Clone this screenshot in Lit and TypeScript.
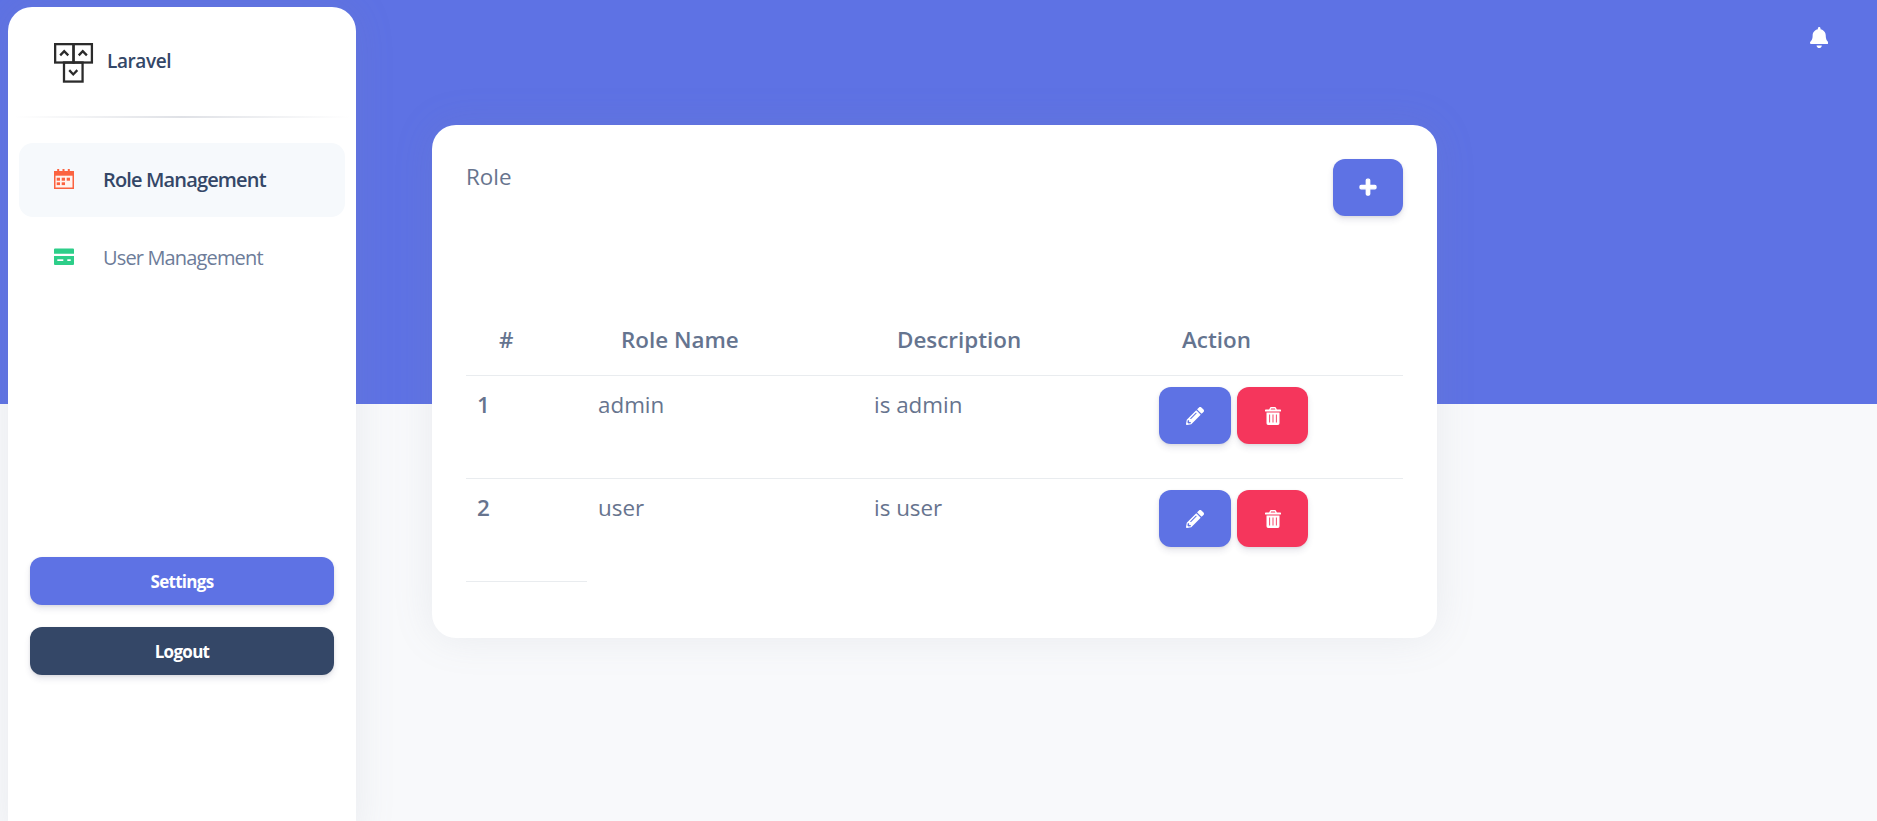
import {customElement} from "lit/decorators.js";
import {css, html, LitElement, svg} from "lit";

const plusIcon = svg`<path stroke="currentColor" stroke-width="36" d="M416 208H272V64c0-17.67-14.33-32-32-32h-32c-17.67 0-32 14.33-32 32v144H32c-17.67 0-32 14.33-32 32v32c0 17.67 14.33 32 32 32h144v144c0 17.67 14.33 32 32 32h32c17.67 0 32-14.33 32-32V304h144c17.67 0 32-14.33 32-32v-32c0-17.67-14.33-32-32-32z"/>`;
const pencilIcon = svg`<path d="M497.9 142.1l-46.1 46.1c-4.7 4.7-12.3 4.7-17 0l-111-111c-4.7-4.7-4.7-12.3 0-17l46.1-46.1c18.7-18.7 49.1-18.7 67.9 0l60.1 60.1c18.8 18.7 18.8 49.1 0 67.9zM284.2 99.8L21.6 362.4.4 483.9c-2.9 16.4 11.4 30.6 27.8 27.8l121.5-21.3 262.6-262.6c4.7-4.7 4.7-12.3 0-17l-111-111c-4.8-4.7-12.4-4.7-17.1 0zM124.1 339.9c-5.5-5.5-5.5-14.3 0-19.8l154-154c5.5-5.5 14.3-5.5 19.8 0s5.5 14.3 0 19.8l-154 154c-5.5 5.5-14.3 5.5-19.8 0zM88 424h48v36.3l-64.5 11.3-31.1-31.1L51.7 376H88v48z"/>`;
const trashIcon = svg`
  <path fill="none" stroke="currentColor" stroke-width="1.4" d="M4.7 3.2 5.5 1.3a.8.8 0 0 1 .7-.5h3.6a.8.8 0 0 1 .7.5l.8 1.9"/>
  <rect x="0" y="2.6" width="16" height="2" rx=".7"/>
  <path fill-rule="evenodd" d="M1.5 5.6h13v10.7a1.6 1.6 0 0 1-1.6 1.6H3.1a1.6 1.6 0 0 1-1.6-1.6zM4.2 7.6v8h.9v-8zM7.55 7.6v8h.9v-8zM10.9 7.6v8h.9v-8z"/>
`;
const bellIcon = svg`<path d="M224 512c35.32 0 63.97-28.65 63.97-64H160.03c0 35.35 28.65 64 63.97 64zm215.39-149.71c-19.32-20.76-55.47-51.99-55.47-154.29 0-77.7-54.48-139.9-127.94-155.16V32c0-17.67-14.32-32-31.98-32s-31.98 14.33-31.98 32v20.84C118.56 68.1 64.08 130.3 64.08 208c0 102.3-36.15 133.53-55.47 154.29-6 6.45-8.66 14.16-8.61 21.71.11 16.4 12.98 32 32.1 32h383.8c19.12 0 32-15.6 32.1-32 .05-7.55-2.61-15.27-8.61-21.71z"/>`;

@customElement("app-root")
export class AppRoot extends LitElement {

  roles = [
    {id: 1, name: "admin", description: "is admin"},
    {id: 2, name: "user", description: "is user"},
  ];

  //language=css
  static styles = css`
    * {
      box-sizing: border-box;
    }

    :host {
      display: block;
      height: 821px;
      overflow: hidden;
      font-family: "Open Sans", "Liberation Sans", sans-serif;
      color: #67748e;
    }

    .page {
      display: flex;
      height: 821px;
      background: linear-gradient(#5e72e4 404px, #f8f9fb 404px);
    }

    .sidebar {
      flex: none;
      display: flex;
      flex-direction: column;
      width: 348px;
      height: 840px;
      margin: 7px 0 0 8px;
      background: #fff;
      border-radius: 24px;
      box-shadow: 0 0 40px rgba(130, 140, 155, .13);
    }

    .brand {
      display: flex;
      align-items: center;
      gap: 13px;
      height: 109px;
      padding: 0 0 2px 46px;
      color: #344767;
      font-size: 19px;
      font-weight: 600;
      letter-spacing: -.4px;
    }

    .brand svg {
      display: block;
      width: 40px;
      height: 40px;
      margin-top: 5px;
    }

    .divider {
      height: 2px;
      margin: 0 6px;
      background: linear-gradient(90deg, transparent, #dfe1e6 50%, transparent);
    }

    .nav {
      display: flex;
      flex-direction: column;
      padding: 25px 11px 0;
      gap: 4px;
    }

    .nav a {
      display: flex;
      align-items: center;
      gap: 28px;
      height: 74px;
      padding: 0 0 2px 34px;
      border-radius: 14px;
      font-size: 20px;
      letter-spacing: -.85px;
      color: #6d7c99;
    }

    .nav a svg {
      display: block;
      flex: none;
      width: 22px;
      height: 22px;
    }

    .nav a.active {
      background: #f6f9fc;
      color: #344767;
      font-weight: 600;
    }

    .side-actions {
      display: flex;
      flex-direction: column;
      gap: 22px;
      margin-top: 262px;
      padding: 0 22px;
    }

    .side-actions button {
      height: 48px;
      border: 0;
      border-radius: 12px;
      color: #fff;
      font: 700 17px "Open Sans", sans-serif;
      letter-spacing: -.7px;
      box-shadow: 0 4px 6px rgba(50, 50, 93, .11), 0 1px 3px rgba(0, 0, 0, .08);
    }

    .btn-primary {
      background: #5e72e4;
    }

    .btn-dark {
      background: #344767;
    }

    .main {
      flex: 1;
      min-width: 0;
      padding-left: 76px;
    }

    .topbar {
      display: flex;
      justify-content: flex-end;
      height: 125px;
      padding: 27px 49px 0 0;
    }

    .topbar svg {
      display: block;
      width: 18.4px;
      height: 21px;
      fill: #fff;
    }

    .card {
      width: 1005px;
      height: 513px;
      padding: 34px;
      background: #fff;
      border-radius: 24px;
      box-shadow: 0 0 40px rgba(130, 140, 155, .13);
    }

    .card-head {
      display: flex;
      justify-content: space-between;
      align-items: flex-start;
      height: 146px;
    }

    .card-head h3 {
      margin: 0;
      font-size: 22.4px;
      line-height: 36px;
      font-weight: 400;
      color: #67748e;
    }

    .icon-btn {
      display: flex;
      align-items: center;
      justify-content: center;
      border: 0;
      padding: 0;
      color: #fff;
      border-radius: 12px;
      box-shadow: 0 4px 6px rgba(50, 50, 93, .11), 0 1px 3px rgba(0, 0, 0, .08);
    }

    .icon-btn svg {
      display: block;
      fill: currentColor;
    }

    .add {
      width: 70px;
      height: 57px;
    }

    .add svg {
      width: 16px;
      height: 18.3px;
      overflow: visible;
    }

    table {
      width: 937px;
      table-layout: fixed;
      border-collapse: collapse;
      font-size: 22.4px;
    }

    th {
      height: 70px;
      padding: 0 0 0 34px;
      text-align: left;
      font-weight: 600;
      color: #65748f;
      border-bottom: 1px solid #e9ecef;
    }

    th:first-child {
      padding-left: 33px;
    }

    td {
      height: 103px;
      padding: 12px 12px 0 11px;
      vertical-align: top;
      color: #67748e;
      line-height: 34px;
    }

    td:first-child {
      font-weight: 600;
      border-bottom: 1px solid #e9ecef;
    }

    tr:first-child td {
      border-bottom: 1px solid #e9ecef;
    }

    .actions {
      display: flex;
      gap: 6px;
      margin-top: -1px;
    }

    .edit, .remove {
      height: 57px;
      padding-top: 1px;
    }

    .edit {
      width: 72px;
      background: #5e72e4;
    }

    .remove {
      width: 71px;
      background: #f5365c;
    }

    .edit svg {
      width: 18px;
      height: 18px;
    }

    .remove svg {
      width: 16px;
      height: 18px;
    }
  `;

  render() {
    return html`
      <div class="page">
        <aside class="sidebar">
          <div class="brand">
            <svg viewBox="0 0 42 42" fill="none" stroke="#2b2b2b" stroke-width="2.4">
              <rect x="1.2" y="1.2" width="19.3" height="19.3"/>
              <rect x="20.5" y="1.2" width="19.3" height="19.3"/>
              <rect x="10.5" y="20.5" width="19.5" height="20"/>
              <polyline points="6.5,13 10.7,8.5 15,13"/>
              <polyline points="26,13 30.2,8.5 34.5,13"/>
              <polyline points="16,28.5 20.2,33 24.5,28.5"/>
            </svg>
            <span>Laravel</span>
          </div>
          <div class="divider"></div>
          <nav class="nav">
            <a class="active">
              <svg viewBox="0 0 22 22">
                <path fill="#fb6340" d="M4.2 1h2v2h3.3V1h2v2h3.3V1h2v2H21v18H1V3h3.2z"/>
                <rect x="2.5" y="7.7" width="17" height="11.8" fill="#fff4f0"/>
                <g fill="#fb6340">
                  <rect x="3.7" y="9.7" width="3.3" height="3"/>
                  <rect x="8.7" y="9.7" width="3.3" height="3"/>
                  <rect x="13.7" y="9.7" width="3.3" height="3"/>
                  <rect x="3.7" y="14.3" width="3.3" height="2.8"/>
                  <rect x="8.7" y="14.3" width="3.3" height="2.8"/>
                </g>
              </svg>
              <span>Role Management</span>
            </a>
            <a>
              <svg viewBox="0 0 22 22">
                <path fill="#2dce89" d="M1 3.5a1 1 0 0 1 1-1h18a1 1 0 0 1 1 1v4.2H1zM1 10h20v8a1 1 0 0 1-1 1H2a1 1 0 0 1-1-1z"/>
                <rect x="4.3" y="13.3" width="6" height="1.7" fill="#fff"/>
                <rect x="14.3" y="13.3" width="3.4" height="1.7" fill="#fff"/>
              </svg>
              <span>User Management</span>
            </a>
          </nav>
          <div class="side-actions">
            <button class="btn-primary">Settings</button>
            <button class="btn-dark">Logout</button>
          </div>
        </aside>
        <main class="main">
          <div class="topbar">
            <svg viewBox="0 0 448 512">${bellIcon}</svg>
          </div>
          <section class="card">
            <div class="card-head">
              <h3>Role</h3>
              <button class="icon-btn btn-primary add"><svg viewBox="0 0 448 512">${plusIcon}</svg></button>
            </div>
            <table>
              <colgroup>
                <col style="width: 121px"><col style="width: 276px"><col style="width: 285px"><col>
              </colgroup>
              <thead>
                <tr><th>#</th><th>Role Name</th><th>Description</th><th>Action</th></tr>
              </thead>
              <tbody>
                ${this.roles.map((x) => html`
                  <tr>
                    <td>${x.id}</td>
                    <td>${x.name}</td>
                    <td>${x.description}</td>
                    <td>
                      <div class="actions">
                        <button class="icon-btn edit"><svg viewBox="0 0 512 512">${pencilIcon}</svg></button>
                        <button class="icon-btn remove"><svg viewBox="0 0 16 18">${trashIcon}</svg></button>
                      </div>
                    </td>
                  </tr>
                `)}
              </tbody>
            </table>
          </section>
        </main>
      </div>
    `;
  }
}
